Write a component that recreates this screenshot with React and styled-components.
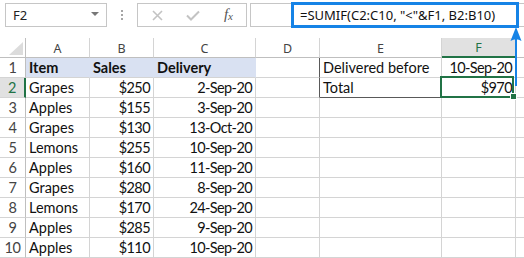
import styled, { createGlobalStyle, css } from "styled-components"

const GlobalStyle = createGlobalStyle`
  html, body {
    margin: 0;
    padding: 0;
    background: #ffffff;
  }
  * {
    box-sizing: border-box;
  }
`

const GREEN = "#217346"
const BLUE = "#1683e6"
const GRID = "#d4d4d4"
const HEAD_LINE = "#bfbfbf"

const columns = ["A", "B", "C", "D", "E", "F", "G"]

// each row: [A, B, C, D, E, F]
const rows = [
  ["Item", "Sales", "Delivery", "", "Delivered before", "10-Sep-20"],
  ["Grapes", "$250", "2-Sep-20", "", "Total", "$970"],
  ["Apples", "$155", "3-Sep-20", "", "", ""],
  ["Grapes", "$130", "13-Oct-20", "", "", ""],
  ["Lemons", "$255", "10-Sep-20", "", "", ""],
  ["Apples", "$160", "11-Sep-20", "", "", ""],
  ["Grapes", "$280", "8-Sep-20", "", "", ""],
  ["Lemons", "$170", "24-Sep-20", "", "", ""],
  ["Apples", "$285", "9-Sep-20", "", "", ""],
  ["Apples", "$110", "10-Sep-20", "", "", ""],
]

// columns whose values sit on the right
const rightAligned = (row, col) => (row === 0 ? col === 5 : col === 1 || col === 2 || col === 5)

export default function App() {
  return (
    <>
      <GlobalStyle />
      <Page>
        <Toolbar>
          <NameBox>
            <span>F2</span>
            <Caret />
          </NameBox>
          <Grip>
            <Dot />
            <Dot />
            <Dot />
          </Grip>
          <FxButtons>
            <svg width="11" height="11" viewBox="0 0 11 11">
              <path d="M1 1 L10 10 M10 1 L1 10" stroke="#c3c3c3" strokeWidth="1.6" fill="none" />
            </svg>
            <svg width="14" height="11" viewBox="0 0 14 11">
              <path d="M1 5.5 L5 9.5 L13 1.5" stroke="#c3c3c3" strokeWidth="2" fill="none" />
            </svg>
            <Fx>
              f<sub>x</sub>
            </Fx>
          </FxButtons>
          <FormulaInput>
            <Highlight>=SUMIF(C2:C10, "&lt;"&amp;F1, B2:B10)</Highlight>
          </FormulaInput>
        </Toolbar>

        <Sheet>
          <Corner>
            <svg width="14" height="13" viewBox="0 0 14 13">
              <path d="M14 0 L14 13 L0 13 Z" fill="#dcdcdc" />
            </svg>
          </Corner>
          {columns.map((c) => (
            <ColHead key={c} $active={c === "F"} $last={c === "G"}>
              {c !== "G" && c}
            </ColHead>
          ))}

          {rows.map((row, r) => (
            <RowGroup key={r}>
              <RowHead $active={r === 1}>{r + 1}</RowHead>
              {row.map((value, c) => (
                <Cell
                  key={c}
                  $right={rightAligned(r, c)}
                  $bold={r === 0 && c < 3}
                  $fill={r === 0 && c < 3}
                  $edgeRight={c === 3 && r < 2}
                  $edgeBottom={r === 1 && (c === 4 || c === 5)}
                  $selected={r === 1 && c === 5}
                >
                  {value}
                </Cell>
              ))}
              <Cell $last />
            </RowGroup>
          ))}
        </Sheet>

        <Arrow width="12" height="62" viewBox="0 0 12 62">
          <path d="M6 1 L11.5 15 Q6 11.5 0.5 15 Z" fill={BLUE} />
          <rect x="5" y="12" width="2" height="48" fill={BLUE} />
        </Arrow>
      </Page>
    </>
  )
}

const Page = styled.div`
  position: relative;
  width: 524px;
  height: 258px;
  overflow: hidden;
  background: #ffffff;
`

const Toolbar = styled.div`
  height: 38px;
  display: flex;
  align-items: flex-start;
  padding: 3px 0 0 5px;
`

const NameBox = styled.div`
  width: 102px;
  height: 24px;
  border: 1px solid #c6c6c6;
  display: flex;
  align-items: center;
  justify-content: space-between;
  padding: 0 7px 0 7px;
  font-family: "Noto Sans", sans-serif;
  font-size: 13px;
  color: #222;
`

const Caret = styled.span`
  width: 0;
  height: 0;
  border-left: 4px solid transparent;
  border-right: 4px solid transparent;
  border-top: 4px solid #777;
  margin-top: -2px;
`

const Grip = styled.div`
  width: 30px;
  height: 24px;
  display: flex;
  flex-direction: column;
  align-items: center;
  justify-content: center;
  gap: 2px;
`

const Dot = styled.span`
  width: 2px;
  height: 2px;
  background: #a6a6a6;
`

const FxButtons = styled.div`
  width: 110px;
  height: 24px;
  border: 1px solid #c6c6c6;
  display: flex;
  align-items: center;
  justify-content: space-between;
  padding: 0 13px 0 14px;
`

const Fx = styled.span`
  font-family: "Liberation Serif", serif;
  font-style: italic;
  font-size: 15px;
  color: #555;
  line-height: 1;
  margin-top: -2px;

  sub {
    font-size: 11px;
    vertical-align: -1px;
  }
`

const FormulaInput = styled.div`
  flex: 1;
  height: 24px;
  margin-left: 3px;
  border: 1px solid #c6c6c6;
  border-right: none;
  display: flex;
`

const Highlight = styled.div`
  width: 228px;
  height: 26px;
  margin: -2px 0 0 40px;
  border: 3px solid ${BLUE};
  display: flex;
  align-items: center;
  padding: 0 0 1px 6px;
  font-family: "Noto Sans", sans-serif;
  font-size: 13px;
  color: #111;
  white-space: nowrap;
`

const Sheet = styled.div`
  display: grid;
  grid-template-columns: 26px 64px 64px 102px 64px 122px 74px 1fr;
  grid-auto-rows: 20px;
`

const RowGroup = styled.div`
  display: contents;
`

const headText = css`
  display: flex;
  align-items: center;
  justify-content: center;
  color: #444;
`

const Corner = styled.div`
  display: flex;
  align-items: flex-end;
  justify-content: flex-end;
  padding: 0 2px 2px 0;
  border-right: 1px solid ${HEAD_LINE};
  border-bottom: 1px solid ${HEAD_LINE};
`

const ColHead = styled.div`
  ${headText};
  font-family: "Noto Sans", sans-serif;
  font-size: 12.5px;
  padding-top: 1px;
  border-right: ${(p) => (p.$last ? "none" : `1px solid ${GRID}`)};
  border-bottom: 1px solid ${HEAD_LINE};
  ${(p) =>
    p.$active &&
    css`
      background: #e1e1e1;
      color: ${GREEN};
      border-bottom: 2px solid ${GREEN};
    `}
`

const RowHead = styled.div`
  ${headText};
  font-family: "Lato", sans-serif;
  font-size: 14.5px;
  line-height: 19px;
  letter-spacing: -0.4px;
  border-right: 1px solid ${HEAD_LINE};
  border-bottom: 1px solid ${GRID};
  ${(p) =>
    p.$active &&
    css`
      background: #e1e1e1;
      color: ${GREEN};
      border-right: 2px solid ${GREEN};
    `}
`

const Cell = styled.div`
  position: relative;
  font-family: "Lato", sans-serif;
  font-size: 14.5px;
  line-height: 19px;
  color: #111;
  white-space: nowrap;
  padding: 0 3px;
  text-align: ${(p) => (p.$right ? "right" : "left")};
  letter-spacing: ${(p) => (p.$right ? "-0.6px" : "0")};
  font-weight: ${(p) => (p.$bold ? 700 : 400)};
  background: ${(p) => (p.$fill ? "#d9e1f2" : "transparent")};
  border-right: 1px solid
    ${(p) => (p.$edgeRight ? "#595959" : p.$fill ? "#d9e1f2" : GRID)};
  border-bottom: 1px solid ${(p) => (p.$edgeBottom ? "#595959" : GRID)};
  ${(p) => p.$last && "border-right: none;"}

  ${(p) =>
    p.$selected &&
    css`
      &::after {
        content: "";
        position: absolute;
        top: -2px;
        left: -2px;
        right: 1px;
        bottom: -1px;
        border: 2px solid ${GREEN};
      }
      &::before {
        content: "";
        position: absolute;
        right: -2px;
        bottom: -3px;
        width: 5px;
        height: 5px;
        background: ${GREEN};
        border: 1px solid #ffffff;
        z-index: 1;
      }
    `}
`

const Arrow = styled.svg`
  position: absolute;
  left: 510px;
  top: 26px;
`
